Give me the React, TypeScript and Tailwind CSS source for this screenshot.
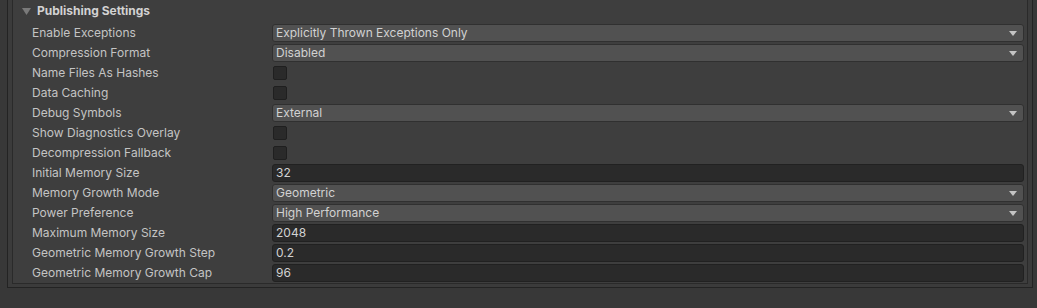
// Publishing settings inspector panel (Unity dark theme)

import React from "react";

type Row =
    | { label: string; kind: "dropdown"; value: string }
    | { label: string; kind: "text"; value: string }
    | { label: string; kind: "checkbox" };

const rows: Row[] = [
    { label: "Enable Exceptions", kind: "dropdown", value: "Explicitly Thrown Exceptions Only" },
    { label: "Compression Format", kind: "dropdown", value: "Disabled" },
    { label: "Name Files As Hashes", kind: "checkbox" },
    { label: "Data Caching", kind: "checkbox" },
    { label: "Debug Symbols", kind: "dropdown", value: "External" },
    { label: "Show Diagnostics Overlay", kind: "checkbox" },
    { label: "Decompression Fallback", kind: "checkbox" },
    { label: "Initial Memory Size", kind: "text", value: "32" },
    { label: "Memory Growth Mode", kind: "dropdown", value: "Geometric" },
    { label: "Power Preference", kind: "dropdown", value: "High Performance" },
    { label: "Maximum Memory Size", kind: "text", value: "2048" },
    { label: "Geometric Memory Growth Step", kind: "text", value: "0.2" },
    { label: "Geometric Memory Growth Cap", kind: "text", value: "96" },
];

const Field: React.FC<{ row: Row }> = ({ row }) => {
    if (row.kind === "checkbox") {
        return (
            <div className="w-[14px] h-[14px] ml-[1px] rounded-[2px] bg-[#2a2a2a] border border-[#1f1f1f]" />
        );
    }
    if (row.kind === "text") {
        return (
            <div className="flex-1 h-[18px] rounded-[3px] bg-[#2a2a2a] border border-[#212121] flex items-center pl-[3px] text-[#d2d2d2]">
                {row.value}
            </div>
        );
    }
    return (
        <div className="flex-1 h-[18px] rounded-[3px] bg-[#515151] border border-[#303030] flex items-center pl-[3px] pr-[6px] text-[#d2d2d2]">
            <span className="flex-1">{row.value}</span>
            <svg width="8" height="5" viewBox="0 0 8 5">
                <path d="M0 0h8L4 5z" fill="#c4c4c4" />
            </svg>
        </div>
    );
};

export default function App() {
    return (
        <div
            className="w-[1037px] h-[308px] bg-[#383838] overflow-hidden text-[12px] leading-none"
            style={{ fontFamily: "Inter, 'Liberation Sans', sans-serif" }}
        >
            <div className="ml-[7px] w-[1026px] h-[288px] border-x border-b border-[#232323] bg-[#3b3b3b] pl-[4px] pr-[4px] pb-[3px]">
                <div className="h-full border-x border-b border-[#2a2a2a] bg-[#3e3e3e] pr-[3px]">
                    <div className="h-[23px] pb-[1px] flex items-center pl-[9px] gap-[6px]">
                        <svg width="9" height="7" viewBox="0 0 9 7" className="mt-[1px]">
                            <path d="M0 0h9L4.5 7z" fill="#7a7a7a" />
                        </svg>
                        <span className="font-bold text-[#d2d2d2] text-[12px]">Publishing Settings</span>
                    </div>
                    {rows.map((row) => (
                        <div key={row.label} className="h-[20px] flex items-center">
                            <div className="w-[259px] pl-[19px] text-[#c4c4c4] shrink-0">{row.label}</div>
                            <Field row={row} />
                        </div>
                    ))}
                </div>
            </div>
        </div>
    );
}
